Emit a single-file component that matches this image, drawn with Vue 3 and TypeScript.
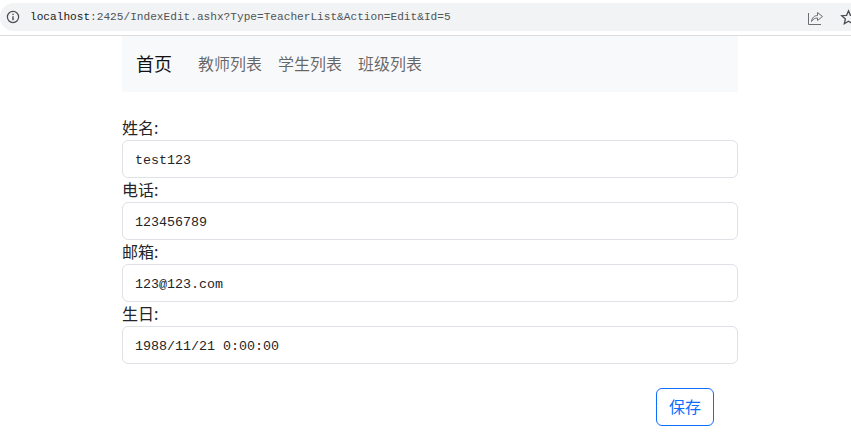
<script setup lang="ts">
const links: string[] = ['教师列表', '学生列表', '班级列表']
const fields: { label: string; value: string }[] = [
  { label: '姓名:', value: 'test123' },
  { label: '电话:', value: '123456789' },
  { label: '邮箱:', value: '123@123.com' },
  { label: '生日:', value: '1988/11/21 0:00:00' },
]
</script>

<template>
  <div class="page">
    <header class="chrome">
      <div class="omnibox">
        <svg class="info" width="14" height="14" viewBox="0 0 14 14" fill="none" stroke="#4a4d51">
          <circle cx="7" cy="7" r="5.6" stroke-width="1.2" />
          <path d="M7 6.2V10.2" stroke-width="1.4" />
          <path d="M7 3.7V5.1" stroke-width="1.4" />
        </svg>
        <span class="url"><span class="host">localhost</span>:2425/IndexEdit.ashx?Type=TeacherList&amp;Action=Edit&amp;Id=5</span>
        <svg class="share" width="17" height="17" viewBox="0 0 17 17" fill="none" stroke="#6b6f73" stroke-width="1">
          <path d="M1.5 4V15.5H14" />
          <path d="M4.5 12.5C5 8.5 7.5 6.5 10.5 6.5V3.5L15.5 7.5L10.5 11.5V9C8 9 6 10 4.5 12.5Z" />
        </svg>
        <svg class="star" width="17" height="17" viewBox="0 0 17 17" fill="none" stroke="#4a4d51" stroke-width="1.3">
          <path d="M8.5 1.8L10.4 6.3L15.3 6.7L11.6 9.9L12.7 14.7L8.5 12.2L4.3 14.7L5.4 9.9L1.7 6.7L6.6 6.3Z" />
        </svg>
      </div>
    </header>

    <main class="container">
      <nav class="navbar">
        <a class="brand">首页</a>
        <a v-for="link in links" :key="link" class="nav-link">{{ link }}</a>
      </nav>

      <form class="form" @submit.prevent>
        <div v-for="field in fields" :key="field.label" class="field">
          <label class="label">{{ field.label }}</label>
          <input class="control" type="text" :value="field.value" />
        </div>
        <div class="actions">
          <button class="save" type="submit">保存</button>
        </div>
      </form>
    </main>
  </div>
</template>

<style>
html, body { margin: 0; background: #fff; overflow: hidden; }
</style>

<style scoped>
.page {
  width: 851px;
  height: 445px;
  overflow: hidden;
  font-family: "Liberation Mono", "Noto Sans CJK SC", monospace;
  color: #212529;
}
.chrome {
  height: 36px;
  padding-top: 3px;
  box-sizing: border-box;
  border-bottom: 1px solid #dcdcdc;
}
.omnibox {
  height: 28px;
  background: #f1f3f4;
  display: flex;
  align-items: center;
  padding-left: 6px;
  border-radius: 14px 0 0 14px;
}
.info { flex: none; }
.url {
  margin-left: 10px;
  font-size: 11.13px;
  color: #4f5357;
  white-space: nowrap;
  flex: 1;
}
.host { color: #202124; }
.share { flex: none; margin-right: 16px; margin-left: 1px; }
.star { flex: none; margin-right: -6px; }
.container {
  width: 616px;
  margin-left: 122px;
}
.navbar {
  height: 56px;
  box-sizing: border-box;
  background: #f8f9fa;
  display: flex;
  align-items: center;
  padding: 0 0 2px 14px;
  font-family: "Noto Sans CJK SC", sans-serif;
}
.brand {
  font-size: 18px;
  color: #111;
  margin-right: 18px;
}
.nav-link {
  font-size: 16px;
  color: rgba(0, 0, 0, 0.6);
  padding: 0 8px;
}
.form {
  padding-top: 24px;
}
.field {
  display: flex;
  flex-direction: column;
}
.label {
  height: 24px;
  line-height: 22px;
  font-size: 16px;
  font-family: "Noto Sans CJK SC", sans-serif;
  color: #212529;
}
.control {
  box-sizing: border-box;
  width: 100%;
  height: 38px;
  border: 1px solid #dee2e6;
  border-radius: 6px;
  padding: 2px 12px 0;
  font-family: "Liberation Mono", monospace;
  font-size: 13.33px;
  color: #212529;
  background: #fff;
  outline: none;
}
.actions {
  display: flex;
  justify-content: flex-end;
  padding: 24px 24px 0 0;
}
.save {
  box-sizing: border-box;
  width: 58px;
  height: 38px;
  border: 1px solid #0d6efd;
  border-radius: 6px;
  background: #fff;
  color: #0d6efd;
  font-size: 16px;
  line-height: 22px;
  font-family: "Noto Sans CJK SC", sans-serif;
  padding: 0 0 2px;
}
</style>
